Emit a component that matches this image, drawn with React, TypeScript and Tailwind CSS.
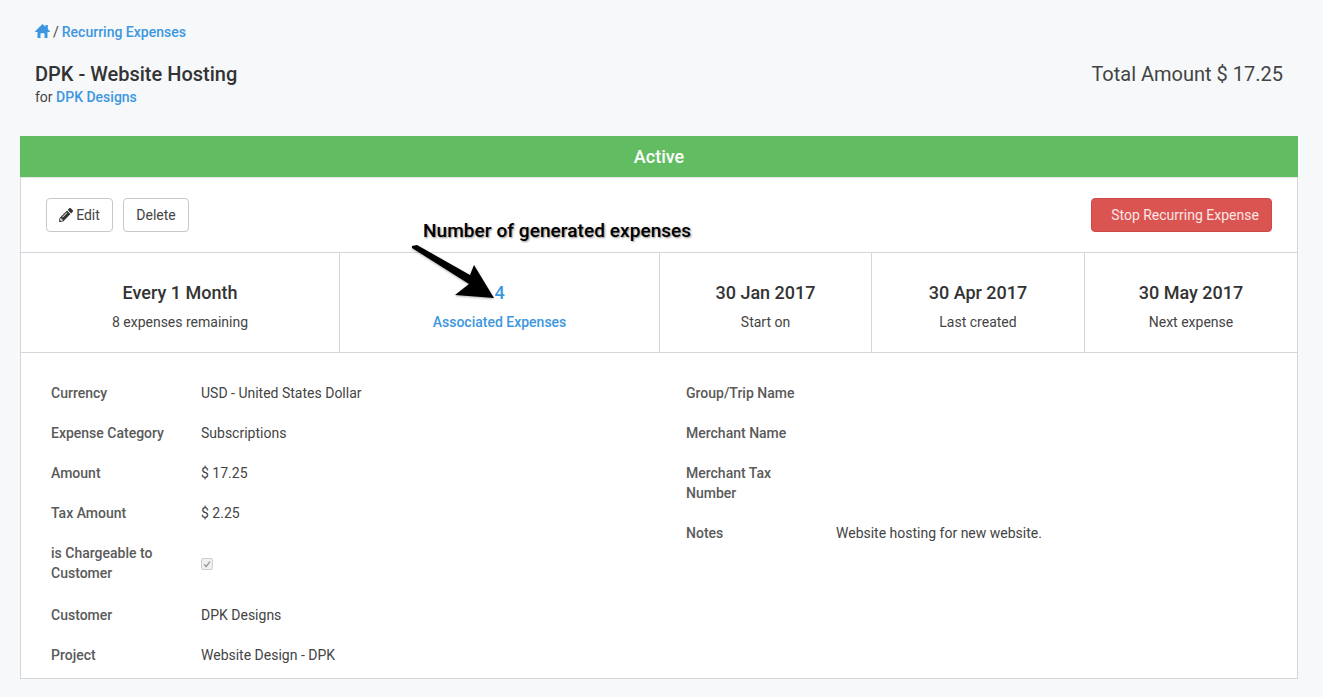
import React from "react";
import { FaPencilAlt } from "react-icons/fa";

const Row = ({ label, children }: { label: React.ReactNode; children?: React.ReactNode }) => (
  <div className="flex mb-5 text-[14px] leading-5">
    <div className="w-[150px] pr-5 shrink-0 font-medium text-[#5a5a5a]">{label}</div>
    <div className="flex-1 text-[#444]">{children}</div>
  </div>
);

const Stat = ({ title, sub, link, last }: { title: string; sub: string; link?: boolean; last?: boolean }) => (
  <div className={`flex flex-col items-center pt-[28px] h-[99px] ${last ? "" : "border-r border-[#d3d6da]"}`}>
    <div className={`text-[18px] leading-[24px] font-medium ${link ? "text-[#3d97e0]" : "text-[#333]"}`}>{title}</div>
    <div className={`text-[14px] leading-5 mt-[7px] ${link ? "text-[#3d97e0] font-medium" : "text-[#444]"}`}>{sub}</div>
  </div>
);

export default function App() {
  return (
    <div className="relative min-h-[697px] bg-[#f6f8fa] pl-5 pr-[25px] font-['Roboto',sans-serif] text-[#333] overflow-hidden">
      <div className="px-[15px] pt-[22px]">
        <div className="flex items-center h-5 text-[14px] leading-5">
          <svg viewBox="0 0 44 42" className="w-[15px] h-[14px] mb-[3px]" fill="#3d97e0">
            <path d="M22 0 L31 8 V3 H38 V15 L44 22 V24 H37 V42 H28 V28 H16 V42 H7 V24 H0 V22 Z" />
          </svg>
          <span className="ml-[3px] text-[#444]">/</span>
          <a className="ml-[3px] text-[#3d97e0] font-medium">Recurring Expenses</a>
        </div>
        <div className="flex justify-between mt-[20px]">
          <div>
            <div className="text-[20px] leading-[24px] font-medium text-[#333]">DPK - Website Hosting</div>
            <div className="text-[14px] leading-5 mt-[1px] text-[#444]">
              for <a className="text-[#3d97e0] font-medium">DPK Designs</a>
            </div>
          </div>
          <div className="text-[20px] leading-[24px] text-[#444]">Total Amount $ 17.25</div>
        </div>
      </div>

      <div className="mt-[29px] bg-[#62bd62] text-white text-[18px] font-medium h-[41px] leading-[42px] text-center">Active</div>
      <div className="bg-white border-x border-b border-[#d3d6da] h-[502px]">
        <div className="h-[76px] border-y border-y-[#d3d6da] border-t-[#e4e6e8] flex items-center justify-between px-[25px]">
          <div className="flex gap-[10px]">
            <button className="flex items-center justify-center h-[34px] w-[67px] bg-white border border-[#c8c8c8] rounded text-[14px] text-[#444]">
              <FaPencilAlt className="w-[14px] h-[14px] mr-[3px] text-[#333]" />
              Edit
            </button>
            <button className="h-[34px] w-[66px] bg-white border border-[#c8c8c8] rounded text-[14px] text-[#444]">Delete</button>
          </div>
          <button className="h-[34px] w-[181px] bg-[#da5452] border border-[#cc4a48] rounded text-[14px] text-[#fbe6e5] pl-[7px]">Stop Recurring Expense</button>
        </div>
        <div className="grid grid-cols-[319px_320px_212px_213px_1fr] border-b border-[#d3d6da]">
          <Stat title="Every 1 Month" sub="8 expenses remaining" />
          <Stat title="4" sub="Associated Expenses" link />
          <Stat title="30 Jan 2017" sub="Start on" />
          <Stat title="30 Apr 2017" sub="Last created" />
          <Stat title="30 May 2017" sub="Next expense" last />
        </div>
        <div className="flex pt-[30px] pl-[30px]">
          <div className="w-[635px] shrink-0">
            <Row label="Currency">USD - United States Dollar</Row>
            <Row label="Expense Category">Subscriptions</Row>
            <Row label="Amount">$ 17.25</Row>
            <Row label="Tax Amount">$ 2.25</Row>
            <Row label="is Chargeable to Customer">
              <div className="flex items-center h-[42px]">
                <div className="w-3 h-3 rounded-[2px] border border-[#cfcfcf] bg-[#f0f0f0] flex items-center justify-center">
                  <svg viewBox="0 0 12 12" className="w-[10px] h-[10px]">
                    <path d="M2.5 6.5 L5 9 L9.5 3" fill="none" stroke="#8e8e8e" strokeWidth="1.5" />
                  </svg>
                </div>
              </div>
            </Row>
            <Row label="Customer">DPK Designs</Row>
            <Row label="Project">Website Design - DPK</Row>
          </div>
          <div className="flex-1">
            <Row label="Group/Trip Name" />
            <Row label="Merchant Name" />
            <Row label="Merchant Tax Number" />
            <Row label="Notes">Website hosting for new website.</Row>
          </div>
        </div>
      </div>

      <div className="absolute left-[423px] top-[220px] text-[19px] leading-[22px] font-medium text-black whitespace-nowrap tracking-[0.07px] [text-shadow:1px_1px_2px_rgba(0,0,0,0.45)]">
        Number of generated expenses
      </div>
      <svg className="absolute left-[405px] top-[240px] w-[100px] h-[65px]" viewBox="0 0 100 65" style={{ filter: "drop-shadow(0 1px 1px rgba(0,0,0,0.3))" }}>
        <path d="M7 6 L12 5 L65 35 L69 25 L89 58 L50 55 L64 44 L7 8 Z" fill="#000" />
      </svg>
    </div>
  );
}
